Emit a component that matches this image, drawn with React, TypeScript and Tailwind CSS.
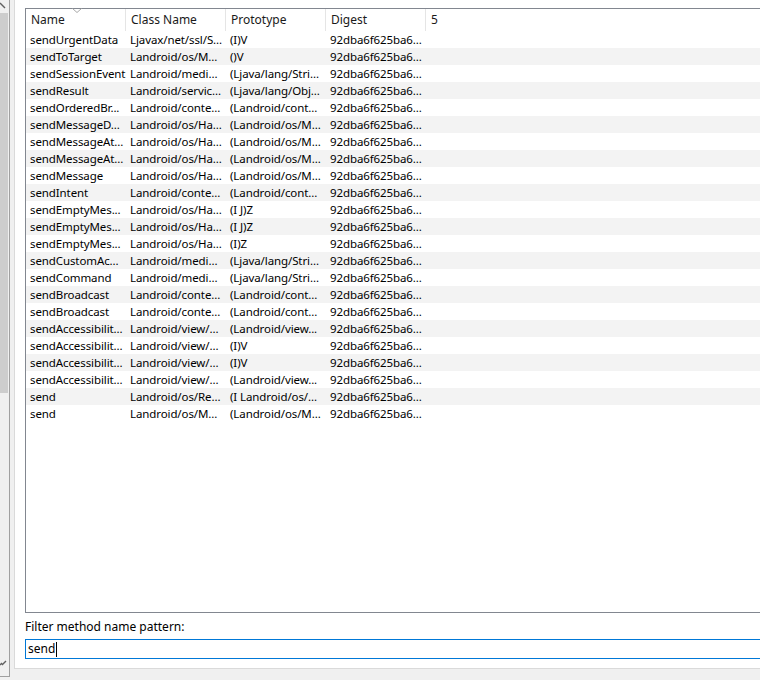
import React from "react";

type Method = {
  name: string;
  cls: string;
  proto: string;
};

const methods: Method[] = [
  { name: "sendUrgentData", cls: "Ljavax/net/ssl/S...", proto: "(I)V" },
  { name: "sendToTarget", cls: "Landroid/os/M...", proto: "()V" },
  { name: "sendSessionEvent", cls: "Landroid/medi...", proto: "(Ljava/lang/Stri..." },
  { name: "sendResult", cls: "Landroid/servic...", proto: "(Ljava/lang/Obj..." },
  { name: "sendOrderedBr...", cls: "Landroid/conte...", proto: "(Landroid/cont..." },
  { name: "sendMessageD...", cls: "Landroid/os/Ha...", proto: "(Landroid/os/M..." },
  { name: "sendMessageAt...", cls: "Landroid/os/Ha...", proto: "(Landroid/os/M..." },
  { name: "sendMessageAt...", cls: "Landroid/os/Ha...", proto: "(Landroid/os/M..." },
  { name: "sendMessage", cls: "Landroid/os/Ha...", proto: "(Landroid/os/M..." },
  { name: "sendIntent", cls: "Landroid/conte...", proto: "(Landroid/cont..." },
  { name: "sendEmptyMes...", cls: "Landroid/os/Ha...", proto: "(I J)Z" },
  { name: "sendEmptyMes...", cls: "Landroid/os/Ha...", proto: "(I J)Z" },
  { name: "sendEmptyMes...", cls: "Landroid/os/Ha...", proto: "(I)Z" },
  { name: "sendCustomAc...", cls: "Landroid/medi...", proto: "(Ljava/lang/Stri..." },
  { name: "sendCommand", cls: "Landroid/medi...", proto: "(Ljava/lang/Stri..." },
  { name: "sendBroadcast", cls: "Landroid/conte...", proto: "(Landroid/cont..." },
  { name: "sendBroadcast", cls: "Landroid/conte...", proto: "(Landroid/cont..." },
  { name: "sendAccessibilit...", cls: "Landroid/view/...", proto: "(Landroid/view..." },
  { name: "sendAccessibilit...", cls: "Landroid/view/...", proto: "(I)V" },
  { name: "sendAccessibilit...", cls: "Landroid/view/...", proto: "(I)V" },
  { name: "sendAccessibilit...", cls: "Landroid/view/...", proto: "(Landroid/view..." },
  { name: "send", cls: "Landroid/os/Re...", proto: "(I Landroid/os/..." },
  { name: "send", cls: "Landroid/os/M...", proto: "(Landroid/os/M..." },
];

const DIGEST = "92dba6f625ba6...";

function HeaderCell({ label, last }: { label: string; last?: boolean }) {
  return (
    <div
      className={
        last
          ? "flex h-full flex-1 items-center pl-[5px]"
          : "flex h-full w-[100px] shrink-0 items-center border-r border-[#e5e5e5] pl-[5px]"
      }
    >
      {label}
    </div>
  );
}

function Cell({ children }: { children: React.ReactNode }) {
  return (
    <div className="w-[100px] shrink-0 overflow-hidden whitespace-nowrap pl-[4px] tracking-[-0.1px]">
      {children}
    </div>
  );
}

function LeftScrollbar() {
  return (
    <div className="flex h-[677px] w-[10px] shrink-0 flex-col border-r border-b border-[#a0a0a0] bg-[#f0f0f0]">
      <div className="relative h-[13px]">
        <svg className="absolute left-0 top-[2px]" width="6" height="7" viewBox="0 0 6 7">
          <path d="M0 1 L5 6" stroke="#606060" strokeWidth="1.4" fill="none" />
        </svg>
      </div>
      <div className="h-[380px] w-[8px] bg-[#cdcdcd]" />
      <div className="relative flex-1">
        <svg className="absolute bottom-[9px] left-0" width="7" height="7" viewBox="0 0 7 7">
          <path d="M0 5 L2 3 M2 5 L6 1" stroke="#606060" strokeWidth="1.4" fill="none" />
        </svg>
      </div>
    </div>
  );
}

export default function App() {
  return (
    <div
      className="flex h-[680px] w-[760px] overflow-hidden bg-[#f0f0f0] text-[12px] text-black"
      style={{ fontFamily: '"Noto Sans", "Liberation Sans", sans-serif' }}
    >
      <LeftScrollbar />
      <div className="ml-[4px] flex h-[669px] min-w-0 flex-1 flex-col border-l border-b border-[#dadada] bg-white pl-[10px] pt-[8px]">
        {/* method table */}
        <div className="mr-[-20px] flex h-[605px] flex-col border border-[#828790]">
          <div className="relative flex h-[22px] items-center text-[#1a1a1a]">
            <svg className="absolute left-[46px] top-[-1px]" width="10" height="6" viewBox="0 0 10 6">
              <path d="M0.5 0.5 L5 4.5 L9.5 0.5" stroke="#a8a8a8" strokeWidth="1" fill="none" />
            </svg>
            <HeaderCell label="Name" />
            <HeaderCell label="Class Name" />
            <HeaderCell label="Prototype" />
            <HeaderCell label="Digest" />
            <HeaderCell label="5" last />
          </div>
          <div className="flex flex-col text-[11.5px]">
            {methods.map((m, i) => (
              <div
                key={i}
                className={
                  i % 2 === 1
                    ? "flex h-[17px] items-center bg-[#f3f3f3] leading-[17px]"
                    : "flex h-[17px] items-center leading-[17px]"
                }
              >
                <Cell>{m.name}</Cell>
                <Cell>{m.cls}</Cell>
                <Cell>{m.proto}</Cell>
                <Cell>{DIGEST}</Cell>
              </div>
            ))}
          </div>
        </div>

        <div className="mt-[6px] leading-[16px]">Filter method name pattern:</div>
        <div className="mr-[-20px] mt-[4px] flex h-[20px] items-center border border-[#0078d7] pl-[2px]">
          <span>send</span>
          <span className="ml-px h-[15px] w-px bg-black" />
        </div>
      </div>
    </div>
  );
}
